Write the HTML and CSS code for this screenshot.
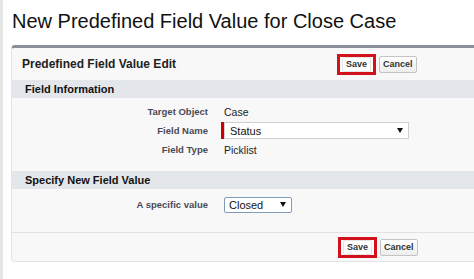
FILE: index.html
```html
<!DOCTYPE html>
<html lang="en">
<head>
    <meta charset="UTF-8">
    <title>New Predefined Field Value</title>
    <link rel="stylesheet" href="styles.css">
</head>
<body>
    <div class="edge"></div>

    <div class="main">
        <h1 class="page-title">New Predefined Field Value for Close Case</h1>

        <div class="panel">
            <!-- top buttons -->
            <div class="panel-head">
                <h2>Predefined Field Value Edit</h2>
                <div class="buttons">
                    <span class="highlight"><button class="btn">Save</button></span>
                    <button class="btn">Cancel</button>
                </div>
            </div>

            <div class="subheader">Field Information</div>
            <div class="fields">
                <div class="label">Target Object</div>
                <div class="value">Case</div>

                <div class="label">Field Name</div>
                <div class="value required">
                    <div class="select wide">
                        <span>Status</span>
                        <svg width="6" height="5" viewBox="0 0 6 5"><path d="M0 0h6L3 5z" fill="#111"/></svg>
                    </div>
                </div>

                <div class="label">Field Type</div>
                <div class="value">Picklist</div>
            </div>

            <div class="subheader">Specify New Field Value</div>
            <div class="fields last">
                <div class="label">A specific value</div>
                <div class="value">
                    <div class="select small">
                        <span>Closed</span>
                        <svg width="6" height="5" viewBox="0 0 6 5"><path d="M0 0h6L3 5z" fill="#111"/></svg>
                    </div>
                </div>
            </div>

            <!-- bottom buttons -->
            <div class="panel-foot">
                <div class="spacer"></div>
                <div class="buttons">
                    <span class="highlight"><button class="btn">Save</button></span>
                    <button class="btn">Cancel</button>
                </div>
            </div>
        </div>
    </div>
</body>
</html>
```

FILE: styles.css
```css
body {
    margin: 0;
    padding: 0;
    display: flex;
    height: 279px;
    overflow: hidden;
    background: #fff;
    font-family: "Liberation Sans", Arial, sans-serif;
    color: #000;
}
.edge {
    width: 3px;
    flex-shrink: 0;
    background: #e6e6e6;
}
.main {
    flex: 1;
    padding-left: 8px;
    margin-right: -12px;
}
.page-title {
    margin: 9px 0 12px 1px;
    font-size: 20px;
    font-weight: normal;
    line-height: 24px;
    color: #111;
}
.panel {
    background: #f8f8f8;
    border-top: 3px solid #8a9099;
    border-left: 1px solid #e4e4e4;
    border-bottom: 1px solid #e4e4e4;
    border-radius: 4px 0 0 4px;
}
.panel-head,
.panel-foot {
    display: flex;
    align-items: center;
    height: 32px;
}
.panel-foot {
    height: 28px;
    border-top: 1px solid #e2e2e2;
}
.panel-head h2 {
    width: 315px;
    margin: 0;
    padding-left: 10px;
    font-size: 12px;
    font-weight: bold;
    color: #222;
}
.spacer {
    width: 326px;
}
.buttons {
    display: flex;
    align-items: center;
    gap: 3px;
}
.btn {
    height: 17px;
    padding: 0 3px;
    font-family: "Liberation Sans", Arial, sans-serif;
    font-size: 9px;
    font-weight: bold;
    color: #333;
    background: linear-gradient(#fff, #ededed);
    border: 1px solid #c4c4c4;
    border-radius: 2px;
}
.highlight {
    display: flex;
    padding: 0 2px;
    background: #fff;
    border: 3px solid #d3111c;
}
.highlight .btn {
    height: 15px;
    border-color: #e4e4e4;
    background: #fff;
}
.subheader {
    height: 18px;
    padding-left: 13px;
    background: #e3e6ea;
    font-size: 11px;
    font-weight: bold;
    line-height: 18px;
    color: #111;
}
.fields {
    display: grid;
    grid-template-columns: 196px 1fr;
    grid-auto-rows: 19px;
    column-gap: 13px;
    align-items: center;
    padding: 4px 0 12px;
}
.fields.last {
    padding: 6px 0 18px;
}
.label {
    text-align: right;
    font-size: 9.5px;
    font-weight: bold;
    color: #4a4a56;
}
.value {
    padding-left: 3px;
    font-size: 10.5px;
    color: #222;
}
.required {
    display: flex;
    padding-left: 0;
}
.required::before {
    content: "";
    width: 3px;
    background: #c00;
}
.select {
    display: flex;
    align-items: center;
    justify-content: space-between;
    box-sizing: border-box;
    background: #fff;
    font-size: 11px;
    color: #111;
}
.select.wide {
    width: 185px;
    height: 17px;
    padding: 0 5px 0 5px;
    border: 1px solid #cfcfcf;
}
.select.small {
    width: 68px;
    height: 16px;
    padding: 0 5px 0 4px;
    border: 1px solid #7f9db9;
    border-radius: 2px;
}
```
